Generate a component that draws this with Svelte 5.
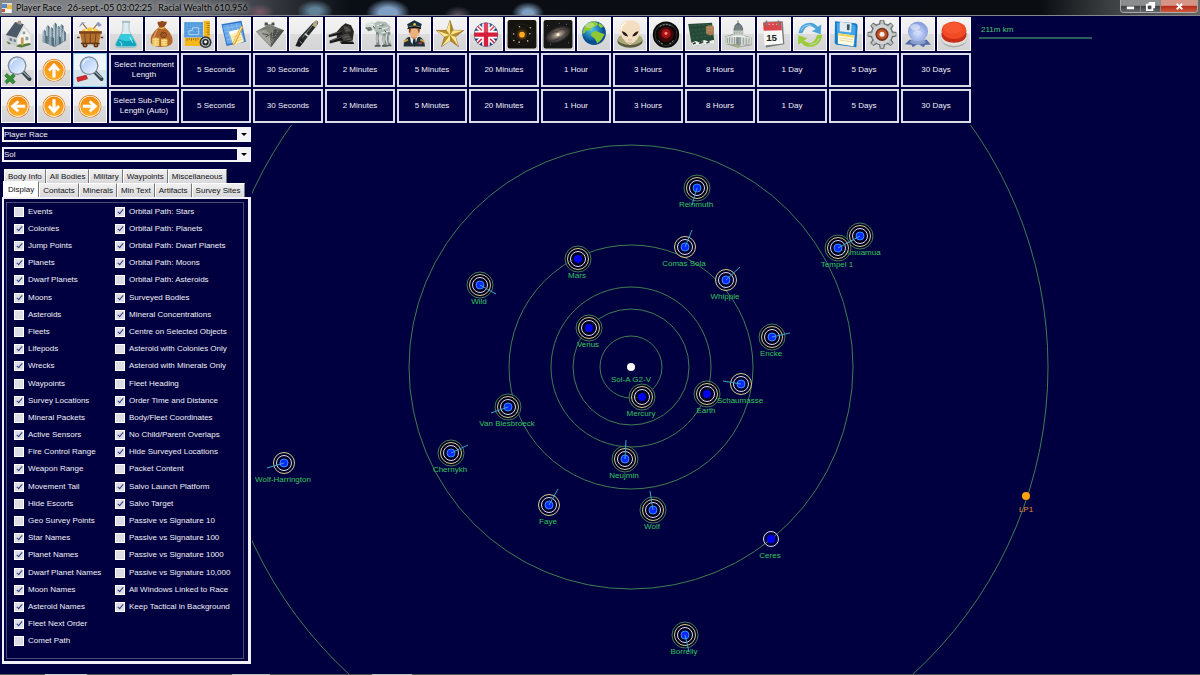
<script lang="ts">
  interface Option {
    label: string;
    on: boolean;
  }

  interface Body {
    name: string;
    x: number;
    y: number;
    rings: number;
    tail?: [number, number];
  }

  const tools = [
    'House', 'City', 'Mining', 'Research', 'Wealth', 'Blueprint', 'Design', 'Ship', 'Missile',
    'Turret', 'Walker', 'Officer', 'Star', 'Flag', 'System', 'Galaxy', 'Earth', 'Alien', 'Eye',
    'Terrain', 'Capitol', 'Calendar', 'Refresh', 'Save', 'Settings', 'Crystal', 'Stop'
  ];

  const durations = [
    '5 Seconds', '30 Seconds', '2 Minutes', '5 Minutes', '20 Minutes', '1 Hour',
    '3 Hours', '8 Hours', '1 Day', '5 Days', '30 Days'
  ];

  const timeRows = [
    { title: 'Select Increment Length', tools: ['ZoomIn', 'Up', 'ZoomOut'] },
    { title: 'Select Sub-Pulse Length (Auto)', tools: ['Left', 'Down', 'Right'] }
  ];

  const backTabs = ['Body Info', 'All Bodies', 'Military', 'Waypoints', 'Miscellaneous'];
  const frontTabs = ['Display', 'Contacts', 'Minerals', 'Min Text', 'Artifacts', 'Survey Sites'];
  let activeTab = $state('Display');

  // a leading + marks an option that is ticked
  function parse(list: string): Option[] {
    return list.split('|').map((s) => ({ label: s.replace('+', ''), on: s.startsWith('+') }));
  }

  let leftOptions = $state(parse(
    'Events|+Colonies|+Jump Points|+Planets|+Dwarf Planets|+Moons|Asteroids|Fleets|+Lifepods|+Wrecks|Waypoints|' +
    '+Survey Locations|Mineral Packets|+Active Sensors|Fire Control Range|+Weapon Range|+Movement Tail|Hide Escorts|' +
    'Geo Survey Points|+Star Names|+Planet Names|+Dwarf Planet Names|+Moon Names|+Asteroid Names|+Fleet Next Order|Comet Path'
  ));
  let rightOptions = $state(parse(
    '+Orbital Path: Stars|+Orbital Path: Planets|+Orbital Path: Dwarf Planets|+Orbital Path: Moons|Orbital Path: Asteroids|' +
    '+Surveyed Bodies|+Mineral Concentrations|+Centre on Selected Objects|Asteroid with Colonies Only|' +
    'Asteroid with Minerals Only|Fleet Heading|+Order Time and Distance|Body/Fleet Coordinates|+No Child/Parent Overlaps|' +
    '+Hide Surveyed Locations|Packet Content|+Salvo Launch Platform|+Salvo Target|Passive vs Signature 10|' +
    'Passive vs Signature 100|Passive vs Signature 1000|Passive vs Signature 10,000|+All Windows Linked to Race|' +
    '+Keep Tactical in Background'
  ));

  const orbits = [31, 58, 80, 122, 222, 417];

  const bodies: Body[] = [
    { name: 'Mercury', x: 642, y: 381, rings: 3 },
    { name: 'Venus', x: 589, y: 312, rings: 3 },
    { name: 'Earth', x: 707, y: 378, rings: 3 },
    { name: 'Mars', x: 578, y: 243, rings: 3 },
    { name: 'Ceres', x: 771, y: 523, rings: 1 },
    { name: 'Reinmuth', x: 697, y: 172, rings: 3, tail: [-5, 17] },
    { name: 'Comas Sola', x: 685, y: 231, rings: 2, tail: [7, -17] },
    { name: 'Whipple', x: 726, y: 264, rings: 2, tail: [14, -13] },
    { name: "'Oumuamua", x: 860, y: 220, rings: 3, tail: [-20, 11] },
    { name: 'Tempel 1', x: 838, y: 232, rings: 3, tail: [15, -8] },
    { name: 'Encke', x: 772, y: 321, rings: 3, tail: [18, -4] },
    { name: 'Schaumasse', x: 741, y: 368, rings: 2, tail: [-18, -3] },
    { name: 'Wild', x: 480, y: 269, rings: 3, tail: [16, 9] },
    { name: 'Van Biesbroeck', x: 508, y: 391, rings: 3, tail: [-17, 6] },
    { name: 'Chernykh', x: 451, y: 437, rings: 3, tail: [17, -8] },
    { name: 'Neujmin', x: 625, y: 443, rings: 3, tail: [1, -19] },
    { name: 'Faye', x: 549, y: 489, rings: 2, tail: [9, -16] },
    { name: 'Wolf', x: 653, y: 494, rings: 3, tail: [-3, -19] },
    { name: 'Borrelly', x: 685, y: 619, rings: 3, tail: [4, 17] },
    { name: 'Wolf-Harrington', x: 284, y: 447, rings: 2, tail: [-17, 5] }
  ];

  function spikes(n: number, outer: number, inner: number, cx: number, cy: number): string {
    return Array.from({ length: n * 2 }, (_, i) => {
      const a = (Math.PI * i) / n - Math.PI / 2;
      const r = i % 2 ? inner : outer;
      return `${(cx + r * Math.cos(a)).toFixed(1)},${(cy + r * Math.sin(a)).toFixed(1)}`;
    }).join(' ');
  }

  const arrowAngle: Record<string, number> = { Up: 0, Right: 90, Down: 180, Left: 270 };
</script>

{#snippet icon(name: string)}
  <svg class="icon" viewBox="0 0 102 102" aria-hidden="true">
    {#if name === 'House'}
      <path d="M16 55 50 64V90L20 80Z" fill="#c9cdd0" />
      <path d="M48 62 70 26 90 50V82L50 92Z" fill="#f4f2ea" />
      <path d="M12 54 42 13 70 20 48 63Z" fill="#4c5866" />
      <path d="M70 20 94 51 88 53 70 30 51 66 47 62Z" fill="#d9dcdf" />
      <path d="M50 9h11v13l-11-3z" fill="#a8968a" />
      <path d="M60 62h9v23l-9 2z" fill="#c59a57" /><path d="M75 60h9v11h-9zM66 43h8v9h-8z" fill="#8f9eaa" />
      <path d="M24 63l8 3v8l-8-3zM37 67l7 2v8l-7-2z" fill="#6b7d8c" />
      <path d="M45 91q10-13 20-3 5-8 14-7 12-4 13 4L62 94Z" fill="#547b35" />
      <path d="M14 76q7-4 15 7l-8 1z" fill="#5f853c" />
    {:else if name === 'City'}
      <path d="M12 73 50 57 91 71 53 93Z" fill="#768a96" />
      {#each [[20, 37], [31, 22], [43, 29], [54, 14], [65, 24], [75, 19], [83, 40]] as [x, y]}
        <path d="M{x - 6} {y + 8}l6-8 6 7V{82 - Math.abs(x - 51) / 3}l-6 4-6-4z" fill="#a9bfca" />
        <path d="M{x} {y}l6 7V{82 - Math.abs(x - 51) / 3}l-6 4z" fill="#5c717f" />
        <path d="M{x - 4} {y + 16}v36M{x} {y + 12}v46M{x + 3} {y + 16}v38" stroke="#e0edf3" stroke-width="1" stroke-dasharray="3 4" />
      {/each}
      <path d="M15 77v-19l8-4 8 5v24zM35 86V63l8-5 8 6v27zM58 86V61l8-4 8 5v19z" fill="#8fa6b3" />
      <path d="M23 54l8 5v24l-8-4zM43 58l8 6v27l-8-4zM66 57l8 5v19l-8 4z" fill="#556b79" />
    {:else if name === 'Mining'}
      <path d="M25 14 50 46M78 15 52 46" stroke="#9d7549" stroke-width="4" />
      <path d="M17 30q1-18 22-15-13 2-22 15zM70 20l8-8 11 11-10 5z" fill="#8f99c2" />
      <path d="M22 45q8-15 18-9 10-12 20-2 14-4 22 11z" fill="#fbc43f" />
      <path d="M32 39l9-5 3 8zM56 36l10 1-6 7z" fill="#fff3b5" />
      <path d="M19 46H86L79 82H26Z" fill="#b3702d" /><path d="M16 42H89v8H16Z" fill="#7c431a" />
      <path d="M34 50l3 31M52 50v31M70 50l-3 31" stroke="#74411b" stroke-width="3" />
      <path d="M10 62h8M85 62h8M22 81h60" stroke="#613514" stroke-width="5" />
      <circle cx="35" cy="86" r="8" fill="#5d3516" /><circle cx="70" cy="86" r="8" fill="#5d3516" />
      <circle cx="35" cy="86" r="3" fill="#cb8b4a" /><circle cx="70" cy="86" r="3" fill="#cb8b4a" />
    {:else if name === 'Research'}
      <path d="M41 13v28L17 82q-2 11 9 12h51q10-1 8-12L61 41V13Z" fill="#dcebf1" stroke="#8ca6b0" stroke-width="2" />
      <path d="M35 52 19 82q-2 9 8 9h49q9 0 7-9L66 52Z" fill="#11a5bd" />
      <path d="M35 52h32l9 16q-22 12-49-1Z" fill="#36cbdc" />
      <path d="M31 74q10 8 6 14M63 60l9 18" stroke="#b8f5f7" stroke-width="3" fill="none" />
      <rect x="37" y="9" width="28" height="6" rx="3" fill="#a9bcc4" />
    {:else if name === 'Wealth'}
      <path d="M42 29Q10 53 15 78q5 15 37 14 34 0 33-21-2-23-27-42z" fill="#b4662c" />
      <path d="M42 29q-7-9-5-18 8 3 14-2 8 4 16 2-1 10-9 18z" fill="#93481d" />
      <path d="M40 31q10 4 20-1" stroke="#ecb95b" stroke-width="4" fill="none" />
      <path d="M36 38Q23 58 25 75" stroke="#d7935a" stroke-width="5" fill="none" />
      <circle cx="56" cy="54" r="9" fill="none" stroke="#713611" stroke-width="3" /><path d="M60 50q-9-3-9 4t9 3" stroke="#713611" stroke-width="2" fill="none" />
      <path d="M20 63h22v26H20zM48 66h20v24H48z" fill="#e5bb4d" />
      <path d="M20 68h22M20 74h22M20 80h22M20 86h22M48 72h20M48 78h20M48 84h20M31 62v28M58 66v24" stroke="#fff1ab" stroke-width="2" />
    {:else if name === 'Blueprint'}
      <path d="M7 13h60v49H7z" fill="#4f98dc" /><path d="M7 23h60M7 33h60M7 43h60M7 53h60M17 13v48M27 13v48M37 13v48M47 13v48M57 13v48" stroke="#82bcec" />
      <path d="M22 53V40h11v-9h20v22z" stroke="#dff1ff" stroke-width="2" fill="none" />
      <path d="M9 63h60v26H9zM69 9h20v80H69z" fill="#f5b719" />
      <path d="M16 64v9M23 64v6M30 64v9M37 64v6M44 64v9M51 64v6M88 17H78M88 24h-7M88 31H78M88 38h-7M88 45H78M88 52h-7" stroke="#6d4a00" stroke-width="2" />
      <circle cx="75" cy="77" r="19" fill="#30363b" /><circle cx="75" cy="77" r="14" fill="#b3bbc0" /><circle cx="75" cy="77" r="10" fill="#222" /><circle cx="75" cy="76" r="5" fill="#eee" />
    {:else if name === 'Design'}
      <path d="M11 20 75 9 89 76 27 89Z" fill="#3277c6" /><path d="M15 24 72 14 84 72 29 83Z" fill="#69a8e8" />
      <path d="M17 34l57-10M20 45l57-10M22 57l57-10M26 70l56-10M29 22l13 58M43 19l13 58M58 17l12 56" stroke="#b9daf8" stroke-width="1" />
      <path d="M35 44 69 36 83 75 49 87Z" fill="#fff0ba" /><path d="M35 44 69 36l2 7-34 9z" fill="#f8fbff" />
      <path d="M47 61l25-8M49 69l25-8M52 76l24-8" stroke="#d3b966" stroke-width="2" />
      <path d="M80 29 56 82l-9 6 1-11 24-51z" fill="#e7a52c" /><path d="M76 27 50 81" stroke="#fff4ae" stroke-width="3" />
    {:else if name === 'Ship'}
      <path d="M6 43 40 25 60 25 96 39 54 93Z" fill="#777a72" />
      <path d="M6 43 48 34 54 93Z" fill="#9c9e96" /><path d="M48 34 96 39 54 93Z" fill="#4e544d" />
      <path d="M35 34h30l-8 13H45ZM42 23h16v11H42ZM34 20h31v5H34Z" fill="#7e8178" />
      <path d="M34 14h10v8H34zM56 14h9v8h-9z" fill="#4b4f4a" />
      <path d="M18 45 52 82M29 42 51 71M50 47 53 88M60 42 56 77M77 40 55 83" stroke="#c8cabe" stroke-width="2" stroke-dasharray="5 3" />
      <path d="M27 50l18 3M37 60l12-6M62 53l14-2M60 64l9-3" stroke="#3f453e" stroke-width="3" />
    {:else if name === 'Missile'}
      <path d="M82 9Q93 7 88 21L44 76 32 92l-14-4 9-23L72 17Z" fill="#292d2c" />
      <path d="M73 22 40 62" stroke="#858b86" stroke-width="3" /><path d="M82 9q-9 6-11 14l10 8q8-8 7-20z" fill="#b9aa83" />
      <path d="M49 48l15 12-3 4-15-12z" fill="#d9ddd9" /><path d="M36 65l10 9-16 18-13-3z" fill="#161b1b" />
      <path d="M31 74l8 7" stroke="#a8aba6" stroke-width="3" />
    {:else if name === 'Turret'}
      <path d="M50 26l12-9 18 6 9 20-4 29-27 7-24-12 2-25z" fill="#292827" />
      <path d="M47 41 9 53v8l44-10zM46 59 12 72v9l45-12z" fill="#151515" />
      <path d="M48 43 12 54M49 61 15 73" stroke="#777" stroke-width="2" />
      <path d="M55 26l17 1 9 15-19 5zM48 56l21-7 15 19-28 5z" fill="#484440" />
      <path d="M58 31l11 3M62 40l15-2M57 62l18-4M67 69l13-2" stroke="#7a736b" stroke-width="2" />
      <path d="M43 75h43l4 8H50z" fill="#181818" />
    {:else if name === 'Walker'}
      <path d="M29 22 49 10 76 13 91 29 87 49 65 57 45 46Z" fill="#aebbb6" />
      <path d="M12 18l20-6 9 8-2 15-16 5-14-6z" fill="#d5ddd9" /><path d="M10 30l18-1 6 9-14 4zM43 27l16-7 18 2" fill="#69756f" />
      <path d="M45 43l10 5-2 17 3 21-10 2-2-22zM67 52l9-3-2 18 6 21h-12l-3-21zM83 44l8 2-3 18 4 22h-9l-4-21z" fill="#7b8884" />
      <path d="M41 86h18v6H40zM64 86h18v6H64zM82 85h12v5H82z" fill="#4c5752" />
      <path d="M46 26l18-7M57 37l25-7M62 48l23-6M23 19l12 2M48 53v26M70 57v25M87 54v25" stroke="#eef5f0" stroke-width="3" />
      <path d="M54 33l9 2M72 39l5 7M36 26l5 8" stroke="#414b47" stroke-width="3" />
    {:else if name === 'Officer'}
      <path d="M18 91q0-27 19-31l15 6 16-6q16 5 18 31z" fill="#1f303d" />
      <path d="M38 59h25l-5 17-7 15-10-15z" fill="#edf0ef" /><path d="M49 65h6l3 20-6 7-6-7z" fill="#172838" />
      <path d="M42 52h18v12q-9 7-18 0z" fill="#d08d57" /><ellipse cx="52" cy="40" rx="18" ry="22" fill="#edb17b" />
      <path d="M35 34q-2 11 3 15l4-15zM69 34q1 11-3 14l-4-14z" fill="#7b4827" />
      <path d="M29 20 52 7 76 19 72 32H33Z" fill="#172f42" /><path d="M32 30q20-9 40 0l2 6q-21-7-45 0z" fill="#07121e" /><path d="M34 28q19-7 36 0" stroke="#d6b75c" stroke-width="2" fill="none" />
      <circle cx="53" cy="20" r="4" fill="#efca51" /><path d="M18 72l13-6 2 6-15 7zM72 66l12 6v7l-14-7z" fill="#cda841" /><path d="M66 78h10v5H66z" fill="#d5473d" />
    {:else if name === 'Star'}
      <polygon points={spikes(5, 46, 18, 51, 54)} fill="#b68a25" stroke="#7f6120" stroke-width="2" />
      {#each [0, 72, 144, 216, 288] as a}
        <path d="M51 54 51 9 40 39Z" fill="#f8e694" transform="rotate({a} 51 54)" />
      {/each}
    {:else if name === 'Flag'}
      <g clip-path="url(#disc)">
        <path d="M10 12h82v82H10z" fill="#1b3679" /><path d="M10 12 92 94M92 12 10 94" stroke="#fff" stroke-width="15" /><path d="M10 12 92 94M92 12 10 94" stroke="#d62a43" stroke-width="5" />
        <path d="M51 12v82M10 53h82" stroke="#fff" stroke-width="24" /><path d="M51 12v82M10 53h82" stroke="#d51e3c" stroke-width="14" />
        <ellipse cx="48" cy="29" rx="32" ry="17" fill="#fff" opacity=".18" />
      </g>
      <circle cx="51" cy="53" r="38" fill="none" stroke="#183265" stroke-width="2" opacity=".6" />
    {:else if name === 'System'}
      <rect x="5" y="6" width="92" height="91" rx="7" fill="#15130f" />
      <circle cx="51" cy="53" r="21" fill="none" stroke="#49371b" /><circle cx="51" cy="53" r="34" fill="none" stroke="#433720" />
      <circle cx="51" cy="53" r="16" fill="#80500f" opacity=".5" /><circle cx="51" cy="53" r="9" fill="#ffac1d" />
      {#each [[24, 51], [43, 28], [76, 50], [69, 73], [42, 77], [25, 72], [78, 31]] as [x, y]}
        <circle cx={x} cy={y} r="2.5" fill="#cbc4ad" />
      {/each}
    {:else if name === 'Galaxy'}
      <rect x="5" y="6" width="92" height="91" rx="7" fill="#171718" />
      <g transform="rotate(-24 51 53)">
        <ellipse cx="51" cy="53" rx="43" ry="24" fill="url(#haze)" /><ellipse cx="51" cy="53" rx="30" ry="14" fill="url(#haze)" />
        <circle cx="51" cy="53" r="5" fill="#fff2cf" />
        <path d="M17 58q16 12 35 4M22 44q18-10 31 0 18-8 30 8M32 66q30 6 48-9" stroke="#292627" stroke-width="2" fill="none" opacity=".7" />
      </g>
      <path d="M17 24h2M77 20h2M84 79h2M26 84h2M54 17h2" stroke="#eee" stroke-width="2" />
    {:else if name === 'Earth'}
      <circle cx="51" cy="48" r="38" fill="url(#ocean)" />
      <path d="M19 30Q32 10 55 11l10 8-8 7-12 4-5 9-14 2-5 7-7 2zM43 47l13-6 17 7 12 3-9 17-14 13-9-16-12-9zM69 16l13 10-9 6-9-9z" fill="#8fc832" />
      <ellipse cx="37" cy="23" rx="15" ry="9" fill="#fff" opacity=".32" />
    {:else if name === 'Alien'}
      <ellipse cx="51" cy="73" rx="40" ry="22" fill="#5b5c3d" /><ellipse cx="51" cy="68" rx="39" ry="18" fill="#aaa778" />
      <path d="M18 39Q17 8 51 7q35 1 33 33-2 30-33 46Q21 68 18 39z" fill="#f4dec1" />
      <path d="M23 42q6-25 21-30-21 1-24 22z" fill="#fff7e5" /><path d="M25 42q15 2 20 17-17-2-20-17zM78 42q-15 2-20 17 17-2 20-17z" fill="#271b16" />
      <path d="M48 68v4M54 68v4M45 79q6 3 12 0" stroke="#a47d60" stroke-width="2" fill="none" />
    {:else if name === 'Eye'}
      <circle cx="51" cy="53" r="42" fill="#080808" /><circle cx="51" cy="53" r="35" fill="none" stroke="#333" stroke-width="3" />
      <circle cx="51" cy="52" r="25" fill="#410609" /><circle cx="51" cy="50" r="15" fill="#a31117" /><circle cx="51" cy="49" r="5" fill="#ff8069" />
      <path d="M31 27q20-12 40 0M28 72q5 8 12 10M62 82q8-3 12-10" stroke="#bbb" stroke-width="3" fill="none" stroke-dasharray="6 4" />
    {:else if name === 'Terrain'}
      <path d="M7 19 83 15 91 79 19 90Z" fill="#244a37" /><path d="M12 25l70-5M12 39l70-6M18 53l64-10M19 65l66-10" stroke="#315a44" stroke-width="4" stroke-dasharray="9 4" />
      <path d="M16 80l15-7 12 5 15-8 13 4 19-5 2 11-73 10z" fill="#eef0eb" /><path d="M22 83l9-4M42 81l13-5M65 80l10-5" stroke="#2b3330" stroke-width="5" />
      <path d="M63 27q15-7 26 0v24q-12 8-25-1z" fill="#a57c54" /><path d="M67 31l19-1M67 40l20-2" stroke="#b98d67" stroke-width="4" />
    {:else if name === 'Capitol'}
      <path d="M9 59 44 49 94 62v25L51 94 12 84Z" fill="#8d9797" />
      <path d="M51 8v16M38 40q2-21 13-23 14 3 15 23z" fill="#718184" stroke="#566467" stroke-width="3" />
      <path d="M35 40h34v17H35zM10 60l35-8v31l-33 3zM57 55l36 7v22l-36 7z" fill="#d5d9d2" /><path d="M28 61 51 47l27 14z" fill="#eef0e9" />
      <path d="M39 43v13M45 42v13M51 42v13M57 42v13M64 43v13M17 63v17M24 62v18M32 62v20M40 61v23M49 61v25M59 61v25M68 63v22M77 65v18M86 66v15" stroke="#6f7a79" stroke-width="2" />
      <path d="M34 90l10-9 16 9-9 5zM14 85q9-9 18 3M69 87q11-8 20-3" fill="#a3aa86" />
    {:else if name === 'Calendar'}
      <path d="M21 12 79 10 84 84 25 94Z" fill="#75797a" /><path d="M16 15 74 13 80 81 21 88Z" fill="#f8f8f6" /><path d="M16 14 74 12 76 39 18 41Z" fill="#d8444a" />
      <path d="M27 8v18M65 8v18" stroke="#777d7e" stroke-width="5" /><path d="M33 20h6M45 20h6M57 20h4" stroke="#fff" stroke-width="2" />
      <text x="26" y="74" class="day">15</text>
    {:else if name === 'Refresh'}
      <path d="M14 49Q20 16 51 15q16 1 25 13l11-7-2 31-28-10 12-7q-26-25-43 14z" fill="#4ca3dc" />
      <path d="M90 53Q84 91 49 92q-17-1-26-14l-10 7 1-30 29 10-12 7q29 22 43-18z" fill="#9bca3b" />
      <path d="M22 40q10-21 33-17M80 65Q71 85 50 84" stroke="#d5f0f3" stroke-width="2" fill="none" />
    {:else if name === 'Save'}
      <path d="M16 10 80 17q8 1 8 8l-4 68-62-8q-7-1-7-8z" fill="#187bc9" /><path d="M21 15 78 22l4 6-4 57-53-7z" fill="#42a6e9" />
      <path d="M31 12 69 17l-2 29-36-4z" fill="#e5eaed" /><path d="M54 20l9 1-1 18-8-1z" fill="#33576d" />
      <path d="M26 49 78 56l-3 34-50-8z" fill="#fffbe2" /><path d="M30 63l42 6M29 70l42 6" stroke="#d5c689" stroke-width="2" />
      <path d="M26 49 78 56v7l-52-7z" fill="#f8d65b" />
    {:else if name === 'Settings'}
      <circle cx="51" cy="52" r="36" fill="#777c7f" />
      {#each [0, 45, 90, 135, 180, 225, 270, 315] as a}
        <path d="M44 6h14l3 15H41z" fill="#676b6d" transform="rotate({a} 51 52)" /><path d="M47 8h8l2 14H45z" fill="#bfc2c3" transform="rotate({a} 51 52)" />
      {/each}
      <circle cx="51" cy="52" r="32" fill="#d0d3d5" /><circle cx="51" cy="52" r="21" fill="#783019" /><circle cx="51" cy="52" r="16" fill="#bc5126" /><circle cx="51" cy="52" r="8" fill="#f1eee9" />
    {:else if name === 'Crystal'}
      <path d="M24 69 9 84l21 1 4 8 17-10 18 10 5-8h18L79 69z" fill="#536ca6" /><ellipse cx="51" cy="76" rx="25" ry="9" fill="#8a9ed0" />
      <circle cx="51" cy="43" r="32" fill="url(#glass)" /><ellipse cx="42" cy="29" rx="16" ry="10" fill="#fff" opacity=".45" />
      <path d="M39 52q5-16 12-7 6-7 11 4" stroke="#dce7ff" stroke-width="3" fill="none" />
    {:else if name === 'Stop'}
      <path d="M9 48h84v20q-6 25-42 26Q13 92 9 67z" fill="#a9aaa9" /><ellipse cx="51" cy="62" rx="42" ry="27" fill="#dedfdd" />
      <path d="M12 38h78v21q-6 19-39 20-33-1-39-20z" fill="#c92c17" /><ellipse cx="51" cy="39" rx="39" ry="28" fill="#f14a25" /><ellipse cx="47" cy="32" rx="29" ry="18" fill="#fb5f38" opacity=".6" />
    {:else if name === 'ZoomIn' || name === 'ZoomOut'}
      <path d="M66 57 88 80" stroke="#313f4b" stroke-width="12" stroke-linecap="round" /><path d="M66 56 88 76" stroke="#9eacb8" stroke-width="4" />
      <circle cx="48" cy="37" r="30" fill="#7d8b98" /><circle cx="48" cy="37" r="26" fill="url(#lens)" />
      <path d="M28 34q4-18 20-18" stroke="#fff" stroke-width="4" fill="none" opacity=".8" />
      {#if name === 'ZoomIn'}
        <path d="M15 62l11 10 10-9 6 7-8 9 8 10-8 6-9-9-10 9-5-8 8-9-9-8z" fill="#309334" stroke="#17571a" stroke-width="2" />
      {:else}
        <path d="M9 75l30-7 4 11-31 9z" fill="#d9282d" stroke="#8b1719" stroke-width="2" />
      {/if}
    {:else}
      <circle cx="51" cy="52" r="36" fill="#d67814" /><circle cx="51" cy="52" r="34" fill="#fff2db" /><circle cx="51" cy="52" r="31" fill="url(#orange)" />
      <path d="M51 29 69 50l-5 5-9-9v28h-8V46l-9 9-5-5z" fill="#fff" stroke="#fff" stroke-width="2" transform="rotate({arrowAngle[name]} 51 52)" />
    {/if}
  </svg>
{/snippet}

{#snippet toolButton(name: string)}
  <button class="tool" class:hot={name === 'ZoomOut'} type="button" aria-label={name}>{@render icon(name)}</button>
{/snippet}

{#snippet optionList(options: Option[])}
  <div class="options">
    {#each options as option}
      <label class="option"><input type="checkbox" bind:checked={option.on} />{option.label}</label>
    {/each}
  </div>
{/snippet}

<svg class="defs" aria-hidden="true">
  <defs>
    <clipPath id="disc"><circle cx="51" cy="53" r="38" /></clipPath>
    <radialGradient id="ocean" cx=".4" cy=".35"><stop offset="0" stop-color="#4fc8ed" /><stop offset="1" stop-color="#064f91" /></radialGradient>
    <radialGradient id="glass" cx=".5" cy=".6"><stop offset="0" stop-color="#d7e2ff" /><stop offset="1" stop-color="#8ba1e0" /></radialGradient>
    <radialGradient id="haze"><stop offset="0" stop-color="#e0c8a8" /><stop offset=".5" stop-color="#8d8079" /><stop offset="1" stop-color="#2a2626" stop-opacity=".4" /></radialGradient>
    <linearGradient id="lens" x2="1" y2="1"><stop offset="0" stop-color="#a6c5f6" /><stop offset="1" stop-color="#edf4ff" /></linearGradient>
    <linearGradient id="orange" x2="0" y2="1"><stop offset="0" stop-color="#f28a0d" /><stop offset="1" stop-color="#ffae25" /></linearGradient>
  </defs>
</svg>

<div class="window">
  <header class="titlebar">
    <svg class="app-icon" viewBox="0 0 12 12" aria-hidden="true">
      <path d="M1 1h10v10H1z" fill="#ddd" /><path d="M1 2h5v4H1z" fill="#5b87c9" /><path d="M6 3h5v4H6z" fill="#eebf32" /><path d="M1 7h3v3H1z" fill="#c9503a" /><path d="M4 7h6v4H4z" fill="#f4f4f4" />
    </svg>
    <h1>Player Race</h1>
    <span>26-sept.-05 03:02:25</span>
    <span>Racial Wealth 610.956</span>
    <div class="window-buttons">
      <button type="button" aria-label="Minimize"><svg viewBox="0 0 12 12"><path d="M2 6h8v3H2z" fill="#fff" /></svg></button>
      <button type="button" aria-label="Restore"><svg viewBox="0 0 12 12"><path d="M4 2h6v6M2 4h6v6H2z" fill="none" stroke="#fff" stroke-width="2" /></svg></button>
      <button class="close" type="button" aria-label="Close"><svg viewBox="0 0 12 12"><path d="M3 3l6 6M9 3l-6 6" stroke="#fff" stroke-width="2" /></svg></button>
    </div>
  </header>

  <main>
    <svg class="map" aria-label="System map">
      {#each orbits as r}
        <circle class="orbit" cx="631" cy="351" {r} />
      {/each}
      <circle cx="631" cy="351" r="4" fill="#fff" />
      <text class="name" x="631" y="366">Sol-A G2-V</text>

      {#each bodies as body}
        {#if body.rings > 2}<circle class="ring green" cx={body.x} cy={body.y} r="13" />{/if}
        {#if body.rings > 1}<circle class="ring yellow" cx={body.x} cy={body.y} r="10.5" />{/if}
        <circle class="ring white" cx={body.x} cy={body.y} r="7.5" />
        <circle class="dot" class:comet={body.tail} cx={body.x} cy={body.y} r="4" />
        {#if body.tail}
          <line class="tail" x1={body.x} y1={body.y} x2={body.x + body.tail[0]} y2={body.y + body.tail[1]} />
        {/if}
        <text class="name" x={body.x - 1} y={body.y + 19}>{body.name}</text>
      {/each}

      <circle cx="1026" cy="480" r="4" fill="#ffa20d" />
      <text class="name point" x="1026" y="496">LP1</text>

      <text class="scale" x="981" y="16">211m km</text>
      <path class="scale-line" d="M979 22H1092" />
    </svg>

    <div class="toolbar">
      <div class="row">
        {#each tools as name}
          {@render toolButton(name)}
        {/each}
      </div>
      {#each timeRows as row}
        <div class="row">
          {#each row.tools as name}
            {@render toolButton(name)}
          {/each}
          <button class="time" type="button">{row.title}</button>
          {#each durations as duration}
            <button class="time" type="button">{duration}</button>
          {/each}
        </div>
      {/each}
    </div>

    <aside>
      <div class="select">
        <select aria-label="Race"><option>Player Race</option></select>
        <svg viewBox="0 0 6 3" aria-hidden="true"><path d="M0 0h6L3 3z" /></svg>
      </div>
      <div class="select">
        <select aria-label="System"><option>Sol</option></select>
        <svg viewBox="0 0 6 3" aria-hidden="true"><path d="M0 0h6L3 3z" /></svg>
      </div>

      <div class="tabs" role="tablist">
        <div class="tab-row back">
          {#each backTabs as tab}
            <button type="button" role="tab" aria-selected={activeTab === tab} class:active={activeTab === tab} onclick={() => (activeTab = tab)}>{tab}</button>
          {/each}
        </div>
        <div class="tab-row">
          {#each frontTabs as tab}
            <button type="button" role="tab" aria-selected={activeTab === tab} class:active={activeTab === tab} onclick={() => (activeTab = tab)}>{tab}</button>
          {/each}
        </div>
      </div>
      <div class="page">
        <div class="group">
          {@render optionList(leftOptions)}
          {@render optionList(rightOptions)}
        </div>
      </div>
    </aside>
  </main>
  <footer></footer>
</div>

<style>
  :global(body) {
    margin: 0;
    background: #000040;
  }

  .window {
    display: flex;
    flex-direction: column;
    min-height: 100vh;
    overflow: hidden;
    background: #000040;
    color: #f0f0f6;
    font: 8px/10px "Liberation Sans", Arial, sans-serif;
  }

  button,
  select {
    margin: 0;
    padding: 0;
    font: inherit;
    color: inherit;
  }

  .defs {
    position: absolute;
    width: 0;
    height: 0;
  }

  .titlebar {
    display: flex;
    align-items: center;
    gap: 6px;
    height: 15px;
    border-bottom: 1px solid #85878c;
    background:
      radial-gradient(22px 14px at 388px 13px, #7f9fc4 40%, transparent),
      radial-gradient(14px 9px at 458px 15px, #5c5463, transparent),
      radial-gradient(16px 11px at 528px 13px, #7f9fc0 30%, transparent),
      radial-gradient(18px 11px at 315px 11px, #5f8298 30%, transparent),
      radial-gradient(14px 8px at 260px 12px, #7a5a6a, transparent),
      linear-gradient(90deg, #85878b 0, #787b7f 100px, #63666b 200px, #2a2e34 290px, #0a0e15 350px, #0a0d12 1040px, #3d4042 1110px, #676768);
    color: #000;
    font: 9px/15px Lato, "Open Sans", sans-serif;
    white-space: nowrap;
    text-shadow: 0 0 4px #ccc, 0 0 6px #aaa;
  }

  .titlebar h1 {
    margin: 0;
    font: inherit;
  }

  .app-icon {
    width: 12px;
    height: 12px;
    margin: 0 -3px 0 1px;
  }

  .window-buttons {
    display: flex;
    align-self: flex-start;
    margin: 0 2px 0 auto;
    border: 1px solid #aaa;
    border-top: 0;
    border-radius: 0 0 4px 4px;
    overflow: hidden;
  }

  .window-buttons button {
    display: flex;
    align-items: center;
    justify-content: center;
    width: 20px;
    height: 12px;
    border: 0;
    border-right: 1px solid #888;
    background: linear-gradient(#8b8d8f 45%, #3c3f42 50%, #63666a);
  }

  .window-buttons .close {
    width: 36px;
    border-right: 0;
    background: linear-gradient(#d59486 45%, #b32a18 50%, #d05a3c);
  }

  .window-buttons svg {
    width: 11px;
    height: 11px;
  }

  main {
    position: relative;
    display: flex;
    flex: 1;
    flex-direction: column;
    align-items: flex-start;
  }

  .map {
    position: absolute;
    inset: 0;
    width: 100%;
    height: 100%;
  }

  .orbit {
    fill: none;
    stroke: #3f7f50;
  }

  .ring {
    fill: none;
  }

  .ring.green {
    fill: rgb(0 0 16 / 50%);
    stroke: #477a56;
  }

  .ring.yellow {
    fill: rgb(0 0 16 / 40%);
    stroke: #d6cc8c;
  }

  .ring.white {
    stroke: #ded8f4;
  }

  .dot {
    fill: #0000f0;
  }

  .dot.comet {
    fill: #0a28ff;
    stroke: #2f8fff;
  }

  .tail {
    stroke: #3fa3c8;
  }

  .name {
    fill: #38c45c;
    text-anchor: middle;
  }

  .name.point {
    fill: #e58a36;
  }

  .scale {
    fill: #4cc872;
  }

  .scale-line {
    stroke: #55bb77;
    stroke-width: 1;
  }

  .toolbar {
    position: relative;
    display: flex;
    flex-direction: column;
    gap: 2px;
    padding: 1px 1px 2px;
    background: #000040;
  }

  .row {
    display: flex;
    gap: 2px;
  }

  .tool {
    box-sizing: border-box;
    width: 34px;
    height: 34px;
    border: 1px solid #fff;
    background: linear-gradient(#f4f4f4 0, #ececec 50%, #dcdcdc 50%, #d4d4d6);
  }

  .tool.hot {
    border-color: #84d4f4;
    background: linear-gradient(#eef5f9 50%, #d6e4ec 50%);
  }

  .icon {
    display: block;
    width: 100%;
    height: 100%;
  }

  .day {
    fill: #222;
    font: bold 31px "Liberation Sans", sans-serif;
  }

  .time {
    box-sizing: border-box;
    width: 70px;
    height: 34px;
    border: 2px solid #dcdce8;
    background: #000040;
  }

  aside {
    position: relative;
    box-sizing: border-box;
    display: flex;
    flex: 1;
    flex-direction: column;
    width: 252px;
    padding: 2px 1px 10px 2px;
    background: #000040;
  }

  .select {
    position: relative;
    margin-bottom: 5px;
  }

  .select select {
    display: block;
    box-sizing: border-box;
    width: 100%;
    height: 15px;
    border: 2px solid #f4f4f8;
    border-right-width: 14px;
    border-radius: 0;
    outline: 0;
    background: #000040;
    line-height: 11px;
    appearance: none;
  }

  .select svg {
    position: absolute;
    top: 6px;
    right: 4px;
    width: 6px;
    height: 3px;
    pointer-events: none;
  }

  .tabs {
    margin: 2px 0 0 1px;
    color: #111;
  }

  .tab-row {
    display: flex;
    height: 14px;
  }

  .tab-row.back {
    padding-left: 1px;
  }

  .tab-row button {
    height: 14px;
    padding: 0 3px;
    border: solid #fff;
    border-width: 1px 0 0 1px;
    border-right: 1px solid #777;
    background: linear-gradient(#f0f0f0, #d8d8dc);
    white-space: nowrap;
  }

  .tab-row .active {
    height: 16px;
    margin-top: -2px;
    padding: 0 4px;
    background: #fff;
  }

  .page {
    display: flex;
    flex: 1;
    padding: 3px 4px 2px 2px;
    border: 2px solid #f0f0f6;
    border-width: 2px 3px 3px 2px;
  }

  .group {
    display: flex;
    flex: 1;
    padding: 0 0 8px 7px;
    border: 1px solid #4a4a78;
  }

  .options {
    display: grid;
    grid-template-rows: repeat(26, 1fr);
    width: 101px;
  }

  .option {
    display: flex;
    align-items: center;
    gap: 4px;
    white-space: nowrap;
  }

  .option input {
    position: relative;
    box-sizing: border-box;
    flex: none;
    width: 10px;
    height: 10px;
    margin: 0;
    border: 1px solid #fff;
    background: #dcdce4;
    appearance: none;
  }

  .option input:checked::after {
    content: "";
    position: absolute;
    top: 0;
    left: 3px;
    width: 2px;
    height: 5px;
    border: solid #303c80;
    border-width: 0 1px 1px 0;
    transform: rotate(40deg);
  }

  footer {
    height: 1px;
    background: linear-gradient(90deg, #555 45px, #ccc 45px, #ccc 87px, #555 87px, #555 232px, #bbb 232px, #bbb 270px, #555 270px, #555 372px, #bbb 372px, #bbb 412px, #555 412px);
  }
</style>
